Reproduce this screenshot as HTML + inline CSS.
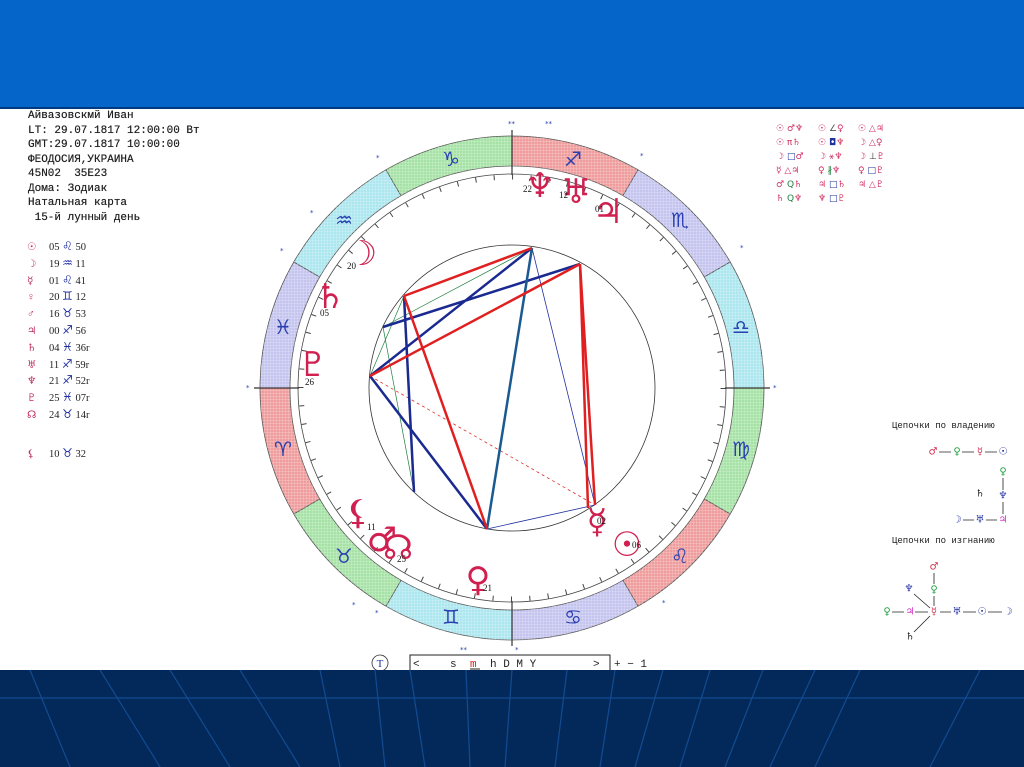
<!DOCTYPE html>
<html><head><meta charset="utf-8"><style>
body{margin:0;width:1024px;height:767px;overflow:hidden;background:#fff;position:relative;font-family:"Liberation Mono","DejaVu Sans Mono",monospace}
#top{position:absolute;left:0;top:0;width:1024px;height:107px;background:#0565c8;border-bottom:2px solid #003a80}
#bot{position:absolute;left:0;top:670px;width:1024px;height:97px;background:#03295a}
.t{position:absolute;font-size:11px;color:#222;white-space:pre;line-height:14.5px;text-shadow:0 0 0.4px #222}
.p{position:absolute;font-size:10.5px;color:#222;white-space:pre;font-family:"Liberation Serif",serif}
.p b{color:#c03060;font-weight:normal;display:inline-block;width:22px}
.p i{color:#2030a0;font-style:normal;font-family:"DejaVu Sans",sans-serif;font-size:12px}
</style></head><body>
<div id="top"></div>
<div class="t" style="left:28px;top:109px">Айвазовскмй Иван
LT: 29.07.1817 12:00:00 Вт
GMT:29.07.1817 10:00:00
ФЕОДОСИЯ,УКРАИНА
45N02  35E23
Дома: Зодиак
Натальная карта
 15-й лунный день</div>
<div class="p" style="left:27px;top:239px;line-height:14.8px"><b>☉</b>05 <i>♌</i> 50
<b>☽</b>19 <i>♒</i> 11
<b>☿</b>01 <i>♌</i> 41
<b>♀</b>20 <i>♊</i> 12
<b>♂</b>16 <i>♉</i> 53
<b>♃</b>00 <i>♐</i> 56
<b>♄</b>04 <i>♓</i> 36r
<b>♅</b>11 <i>♐</i> 59r
<b>♆</b>21 <i>♐</i> 52r
<b>♇</b>25 <i>♓</i> 07r
<b>☊</b>24 <i>♉</i> 14r</div>
<div class="p" style="left:27px;top:446px"><b>⚸</b>10 <i>♉</i> 32</div>

<svg width="1024" height="767" style="position:absolute;left:0;top:0" font-family="DejaVu Sans,sans-serif">
<defs>
<pattern id="g" width="3" height="3" patternUnits="userSpaceOnUse"><path d="M0 0H3M0 0V3" stroke="#fff" stroke-width="0.7" opacity="0.55"/></pattern>
</defs>
<g stroke="#555" stroke-width="0.8">
<path d="M512 136A252 252 0 0 1 638 169.8L623 195.7A222 222 0 0 0 512 166Z" fill="#ee9c9c"/>
<path d="M638 169.8A252 252 0 0 1 730.2 262L704.3 277A222 222 0 0 0 623 195.7Z" fill="#c4c4ee"/>
<path d="M730.2 262A252 252 0 0 1 764 388L734 388A222 222 0 0 0 704.3 277Z" fill="#ace6ee"/>
<path d="M764 388A252 252 0 0 1 730.2 514L704.3 499A222 222 0 0 0 734 388Z" fill="#a6e2a6"/>
<path d="M730.2 514A252 252 0 0 1 638 606.2L623 580.3A222 222 0 0 0 704.3 499Z" fill="#ee9c9c"/>
<path d="M638 606.2A252 252 0 0 1 512 640L512 610A222 222 0 0 0 623 580.3Z" fill="#c4c4ee"/>
<path d="M512 640A252 252 0 0 1 386 606.2L401 580.3A222 222 0 0 0 512 610Z" fill="#ace6ee"/>
<path d="M386 606.2A252 252 0 0 1 293.8 514L319.7 499A222 222 0 0 0 401 580.3Z" fill="#a6e2a6"/>
<path d="M293.8 514A252 252 0 0 1 260 388L290 388A222 222 0 0 0 319.7 499Z" fill="#ee9c9c"/>
<path d="M260 388A252 252 0 0 1 293.8 262L319.7 277A222 222 0 0 0 290 388Z" fill="#c4c4ee"/>
<path d="M293.8 262A252 252 0 0 1 386 169.8L401 195.7A222 222 0 0 0 319.7 277Z" fill="#ace6ee"/>
<path d="M386 169.8A252 252 0 0 1 512 136L512 166A222 222 0 0 0 401 195.7Z" fill="#a6e2a6"/>
</g>
<circle cx="512" cy="388" r="237" fill="none" stroke="url(#g)" stroke-width="30"/>
<circle cx="512" cy="388" r="214" fill="none" stroke="#444" stroke-width="0.8"/>
<circle cx="512" cy="388" r="211" fill="none" stroke="#444" stroke-width="5" stroke-dasharray="1 17.41"/>
<path d="M512 130V175M512 601V646M254 388H299M725 388H770" stroke="#333" stroke-width="1.2"/>
<g fill="#2a40b0" font-size="20" text-anchor="middle" dominant-baseline="central">
<text x="573" y="159">♐</text><text x="680" y="220">♏</text><text x="741" y="327">♎</text><text x="741" y="449">♍</text><text x="680" y="556">♌</text><text x="573" y="617">♋</text><text x="451" y="617">♊</text><text x="344" y="556">♉</text><text x="283" y="449">♈</text><text x="283" y="327">♓</text><text x="344" y="220">♒</text><text x="451" y="159">♑</text>
</g>
<g fill="#2a40b0" font-size="7"><text x="508" y="126">**</text><text x="545" y="126">**</text><text x="640" y="158">*</text><text x="376" y="160">*</text><text x="310" y="215">*</text><text x="280" y="253">*</text><text x="246" y="390">*</text><text x="773" y="390">*</text><text x="740" y="250">*</text><text x="662" y="605">*</text><text x="352" y="607">*</text><text x="375" y="615">*</text><text x="460" y="652">**</text><text x="515" y="652">*</text></g>
<circle cx="512" cy="388" r="143" fill="none" stroke="#333" stroke-width="0.8"/>
<g fill="none">
<path d="M532 248L595 505M487 529L595 505" stroke="#2030a0" stroke-width="0.8"/>
<path d="M404 296L370 376M383 327L414 492M532 248L383 327" stroke="#208040" stroke-width="0.7"/>
<path d="M370 376L595 505" stroke="#e03030" stroke-width="0.8" stroke-dasharray="3 3"/>
<path d="M532 248L370 376M383 327L580 264M404 296L414 492M370 376L487 529" stroke="#1a2a90" stroke-width="2.5"/>
<path d="M532 248L487 529" stroke="#1a5a90" stroke-width="2.5"/>
<path d="M404 296L532 248M370 376L580 264M404 296L487 529M580 264L588 508M580 264L595 505" stroke="#e02020" stroke-width="2.5"/>
</g>
<g fill="#d02050" font-size="34" font-weight="bold" text-anchor="middle" dominant-baseline="central">
<text x="540" y="186">♆</text><text x="576" y="192">♅</text><text x="608" y="212">♃</text><text x="362" y="254">☽</text><text x="330" y="297">♄</text><text x="313" y="365">♇</text><text x="358" y="513">⚸</text><text x="382" y="540">♂</text><text x="398" y="548">☊</text><text x="478" y="580">♀</text><text x="597" y="522">☿</text><text x="627" y="545">☉</text>
</g>
<g fill="#111" font-size="9" font-family="Liberation Serif,serif"><text x="523" y="192">22</text><text x="559" y="198">12</text><text x="595" y="212">01</text><text x="347" y="269">20</text><text x="320" y="316">05</text><text x="305" y="385">26</text><text x="367" y="530">11</text><text x="397" y="562">25</text><text x="483" y="591">21</text><text x="597" y="524">02</text><text x="632" y="548">06</text></g>
<g font-size="9" dominant-baseline="central">
<text x="776" y="129" fill="#d03060">☉ ♂♆</text><text x="818" y="129" fill="#d03060">☉ <tspan fill="#555">∠</tspan>♀</text><text x="858" y="129" fill="#d03060">☉ △♃</text>
<text x="776" y="143" fill="#d03060">☉ π♄</text><text x="818" y="143" fill="#d03060">☉ <tspan fill="#2030a0">◘</tspan>♆</text><text x="858" y="143" fill="#d03060">☽ △♀</text>
<text x="776" y="157" fill="#d03060">☽ <tspan fill="#2030a0">□</tspan>♂</text><text x="818" y="157" fill="#d03060">☽ ⚹♆</text><text x="858" y="157" fill="#d03060">☽ <tspan fill="#333">⊥</tspan>♇</text>
<text x="776" y="171" fill="#d03060">☿ △♃</text><text x="818" y="171" fill="#d03060">♀ <tspan fill="#208040">∦</tspan>♆</text><text x="858" y="171" fill="#d03060">♀ <tspan fill="#2030a0">□</tspan>♇</text>
<text x="776" y="185" fill="#d03060">♂ <tspan fill="#208040">Q</tspan>♄</text><text x="818" y="185" fill="#d03060">♃ <tspan fill="#2030a0">□</tspan>♄</text><text x="858" y="185" fill="#d03060">♃ △♇</text>
<text x="776" y="199" fill="#d03060">♄ <tspan fill="#208040">Q</tspan>♆</text><text x="818" y="199" fill="#d03060">♆ <tspan fill="#2030a0">□</tspan>♇</text>
</g>
<g font-size="9" font-family="Liberation Mono,monospace" fill="#222"><text x="892" y="428">Цепочки по владению</text><text x="892" y="543">Цепочки по изгнанию</text></g>
<g font-size="10" text-anchor="middle" dominant-baseline="central">
<text x="933" y="452" fill="#d03050">♂</text><text x="957" y="452" fill="#20a040">♀</text><text x="980" y="452" fill="#d03050">☿</text><text x="1003" y="452" fill="#2030a0">☉</text>
<text x="1003" y="472" fill="#20a040">♀</text><text x="1003" y="496" fill="#2030a0">♆</text><text x="980" y="494" fill="#222">♄</text><text x="957" y="520" fill="#2030a0">☽</text><text x="980" y="520" fill="#2030a0">♅</text><text x="1003" y="520" fill="#d020c0">♃</text>
<text x="934" y="567" fill="#d03050">♂</text><text x="934" y="590" fill="#20a040">♀</text><text x="909" y="589" fill="#2030a0">♆</text><text x="887" y="612" fill="#20a040">♀</text><text x="910" y="612" fill="#d020c0">♃</text><text x="934" y="612" fill="#d03050">☿</text><text x="957" y="612" fill="#2030a0">♅</text><text x="982" y="612" fill="#2030a0">☉</text><text x="1008" y="612" fill="#2030a0">☽</text><text x="910" y="637" fill="#222">♄</text>
</g>
<g stroke="#222" stroke-width="0.8" fill="none"><path d="M939 452H951M962 452H974M985 452H997M1003 478V490M1003 502V514M963 520H974M986 520H997M934 573V584M934 596V606M915 612H928M892 612H904M940 612H951M976 612H963M1002 612H988M914 594L930 608M914 632L930 616"/></g>
<circle cx="380" cy="663" r="8" fill="#fff" stroke="#333" stroke-width="0.8"/>
<text x="380" y="667" font-size="11" text-anchor="middle" fill="#2030a0" font-family="Liberation Serif,serif">T</text>
<rect x="410" y="655" width="200" height="16" fill="#fff" stroke="#222" stroke-width="1"/>
<g font-family="Liberation Mono,monospace" font-size="11" fill="#222"><text x="413" y="667">&lt;</text><text x="450" y="667">s</text><text x="470" y="667" fill="#d02020">m</text><text x="490" y="667">h D M Y</text><text x="593" y="667">&gt;</text><text x="614" y="667">+  −    1</text></g>
<line x1="470" y1="669" x2="480" y2="669" stroke="#222"/>
</svg>
<div id="bot"><svg width="1024" height="97" style="position:absolute;left:0;top:0"><g stroke="#1a5aa8" stroke-width="1.2" fill="none" opacity="0.7">
<path d="M0 28H1024M375 0L385 97M410 0L425 97M466 0L470 97M512 0L505 97M567 0L555 97M615 0L600 97M663 0L635 97M710 0L680 97M763 0L725 97M815 0L770 97M860 0L815 97M980 0L930 97M30 0L70 97M100 0L160 97M170 0L230 97M240 0L300 97M320 0L340 97"/></g></svg></div>
</body></html>
